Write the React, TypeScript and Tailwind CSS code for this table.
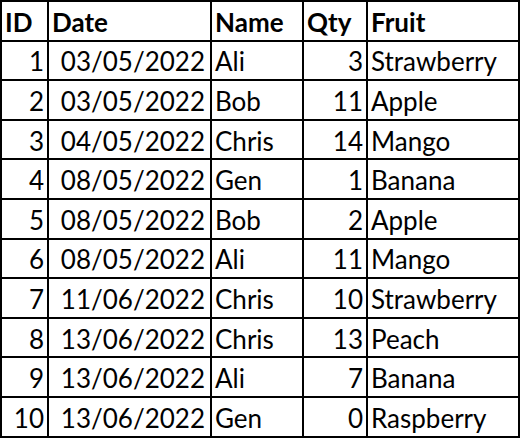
const rows: [number, string, string, number, string][] = [
  [1, "03/05/2022", "Ali", 3, "Strawberry"],
  [2, "03/05/2022", "Bob", 11, "Apple"],
  [3, "04/05/2022", "Chris", 14, "Mango"],
  [4, "08/05/2022", "Gen", 1, "Banana"],
  [5, "08/05/2022", "Bob", 2, "Apple"],
  [6, "08/05/2022", "Ali", 11, "Mango"],
  [7, "11/06/2022", "Chris", 10, "Strawberry"],
  [8, "13/06/2022", "Chris", 13, "Peach"],
  [9, "13/06/2022", "Ali", 7, "Banana"],
  [10, "13/06/2022", "Gen", 0, "Raspberry"],
];

export default function App() {
  return (
    <div className="w-[520px] h-[438px] bg-white">
      <div
        className="grid grid-cols-[45px_161px_90px_62px_150px] auto-rows-[37.6px] gap-[2px] bg-black p-[2px] w-[520px] text-black text-[26px] leading-none"
        style={{ fontFamily: "Lato, 'Open Sans', sans-serif" }}
      >
        {["ID", "Date", "Name", "Qty", "Fruit"].map((h) => (
          <div key={h} className="bg-white flex items-center px-[3px] pt-[2px] font-bold">
            {h}
          </div>
        ))}
        {rows.map(([id, date, name, qty, fruit]) => (
          <div key={id} className="contents">
            <div className="bg-white flex items-center justify-end px-[3px] pt-[2px]">{id}</div>
            <div className="bg-white flex items-center justify-end px-[5px] pt-[2px]">{date}</div>
            <div className="bg-white flex items-center px-[3px] pt-[2px]">{name}</div>
            <div className="bg-white flex items-center justify-end px-[3px] pt-[2px]">{qty}</div>
            <div className="bg-white flex items-center px-[3px] pt-[2px]">{fruit}</div>
          </div>
        ))}
      </div>
    </div>
  );
}
